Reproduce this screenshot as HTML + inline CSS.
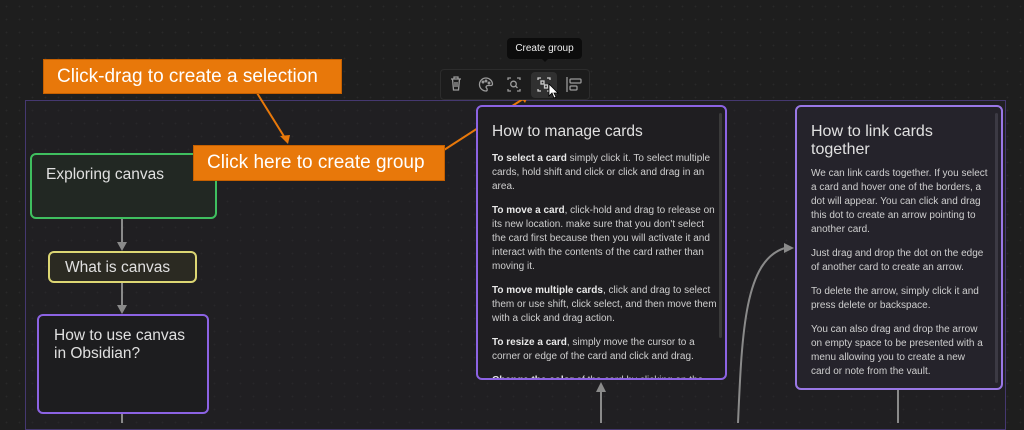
<!DOCTYPE html><html><head><style>
*{margin:0;padding:0;box-sizing:border-box}
body{width:1024px;height:423px;overflow:hidden;background:#1e1e1e;background-image:radial-gradient(#292929 0.7px,transparent 1px);background-size:13px 13px;font-family:"Liberation Sans",sans-serif;position:relative;color:#dadada}
.a{position:absolute}
.card{position:absolute;border-radius:6px;border:2.5px solid}
.card h3{font-weight:normal;font-size:15.5px;line-height:18px;color:#e0e0e0}
.txt{font-size:10px;line-height:14px;color:#cfcfcf;white-space:nowrap}
.txt p{margin-bottom:10px}
.txt b{color:#e8e8e8}
.lab{position:absolute;background:#e8780a;color:#fff;font-size:19px;line-height:34px;padding-left:13px;border:1px solid #c66000}
</style></head><body>
<div class="a" style="left:25px;top:100px;width:981px;height:330px;border:1.5px solid #453870;background:rgba(40,36,52,0.2)"></div>
<svg class="a" style="left:0;top:0" width="1024" height="423">
<g stroke="#8a8a8a" stroke-width="2" fill="#8a8a8a">
<line x1="122" y1="218" x2="122" y2="244"/><polygon points="117,242 127,242 122,251" stroke="none"/>
<line x1="122" y1="282" x2="122" y2="307"/><polygon points="117,305 127,305 122,314" stroke="none"/>
<line x1="122" y1="413" x2="122" y2="423"/>
<line x1="601" y1="423" x2="601" y2="390"/><polygon points="596,392 606,392 601,382" stroke="none"/>
<path d="M738 423 C742 330 745 260 785 248" fill="none"/><polygon points="784,243 794,248 784,253" stroke="none"/>
<line x1="898" y1="390" x2="898" y2="423"/>
</g>
<g stroke="#e8780a" stroke-width="2" fill="#e8780a">
<line x1="257" y1="93" x2="285" y2="138"/><polygon points="280,136 290,135 288,144" stroke="none"/>
<line x1="444" y1="150" x2="523" y2="99"/><polygon points="518,94 530,92 525,103" stroke="none"/>
</g>
</svg>
<div class="card" style="left:30px;top:153px;width:187px;height:66px;border-color:#3fbf5f;background:#222823;padding:11px 14px"><h3>Exploring canvas</h3></div>
<div class="card" style="left:48px;top:251px;width:149px;height:32px;border-color:#dcd673;background:#2b2a22;padding:6px 15px"><h3>What is canvas</h3></div>
<div class="card" style="left:37px;top:314px;width:172px;height:100px;border-color:#8c63e3;background:#1d1d1f;padding:11px 15px"><h3>How to use canvas<br>in Obsidian?</h3></div>
<div class="card" style="left:476px;top:105px;width:251px;height:275px;border-color:#8c63e3;background:#1f1e21;padding:16px 14px;overflow:hidden">
<h3 style="margin-bottom:11px">How to manage cards</h3>
<div class="txt"><p><b>To select a card</b> simply click it. To select multiple<br>cards, hold shift and click or click and drag in an<br>area.</p>
<p><b>To move a card</b>, click-hold and drag to release on<br>its new location. make sure that you don't select<br>the card first because then you will activate it and<br>interact with the contents of the card rather than<br>moving it.</p>
<p><b>To move multiple cards</b>, click and drag to select<br>them or use shift, click select, and then move them<br>with a click and drag action.</p>
<p><b>To resize a card</b>, simply move the cursor to a<br>corner or edge of the card and click and drag.</p>
<p><b>Change the color</b> of the card by clicking on the</p></div>
<div class="a" style="right:3px;top:6px;width:3px;height:225px;background:#3a3a3a;border-radius:2px"></div></div>
<div class="card" style="left:795px;top:105px;width:208px;height:285px;border-color:#9a78e6;background:#25232b;padding:16px 14px;overflow:hidden">
<h3 style="margin-bottom:8px;font-size:16px">How to link cards<br>together</h3>
<div class="txt" style="font-size:10px"><p>We can link cards together. If you select<br>a card and hover one of the borders, a<br>dot will appear. You can click and drag<br>this dot to create an arrow pointing to<br>another card.</p>
<p>Just drag and drop the dot on the edge<br>of another card to create an arrow.</p>
<p>To delete the arrow, simply click it and<br>press delete or backspace.</p>
<p>You can also drag and drop the arrow<br>on empty space to be presented with a<br>menu allowing you to create a new<br>card or note from the vault.</p></div>
<div class="a" style="right:3px;top:6px;width:3px;height:270px;background:#3c3a44;border-radius:2px"></div></div>
<div class="lab" style="left:43px;top:59px;width:299px;height:35px">Click-drag to create a selection</div>
<div class="lab" style="left:193px;top:145px;width:252px;height:36px">Click here to create group</div>
<div class="a" style="left:440px;top:69px;width:150px;height:31px;background:#1c1c1c;border:1px solid #2c2c2c;border-radius:4px"></div>
<div class="a" style="left:531px;top:72px;width:26px;height:26px;background:#303030;border-radius:4px"></div>
<svg class="a" style="left:440px;top:69px" width="150" height="31" fill="none" stroke="#9a9a9a" stroke-width="1.3">
<path d="M11 10h10M14 10v-2h4v2M12.5 10l1 11h5l1-11M15 13v5M17 13v5"/>
<path d="M46 9a6.5 6.5 0 1 0 0 13c1.5 0 1.5-2 .5-3s0-2.5 1.5-2.5h3a1.5 1.5 0 0 0 1.5-1.5A6.5 6.5 0 0 0 46 9z"/><circle cx="43" cy="13" r=".8"/><circle cx="46" cy="12" r=".8"/><circle cx="49" cy="14" r=".8"/>
<path d="M68 11v-2h3M80 11v-2h-3M68 20v2h3M80 20v2h-3"/><circle cx="73.5" cy="15" r="2.8"/><path d="M75.5 17l2 2"/>
<path d="M98 11v-2h3M110 11v-2h-3M98 20v2h3M110 20v2h-3" stroke="#ccc"/><rect x="101" y="12" width="3" height="3" stroke="#ccc"/><rect x="104.5" y="16" width="3" height="3" stroke="#ccc"/>
<path d="M127 8v15"/><rect x="130" y="10" width="11" height="4" rx="1"/><rect x="130" y="17" width="7" height="4" rx="1"/>
</svg>
<svg class="a" style="left:548px;top:83px" width="12" height="16"><path d="M1 1v12l3-3 2 5 2-1-2-4h4z" fill="#fff" stroke="#000" stroke-width=".8"/></svg>
<div class="a" style="left:507px;top:38px;width:75px;height:21px;background:#0c0c0c;border-radius:4px;color:#eee;font-size:10px;line-height:21px;text-align:center">Create group</div>
<div class="a" style="left:541px;top:58px;width:0;height:0;border-left:4px solid transparent;border-right:4px solid transparent;border-top:4px solid #0c0c0c"></div>
</body></html>
